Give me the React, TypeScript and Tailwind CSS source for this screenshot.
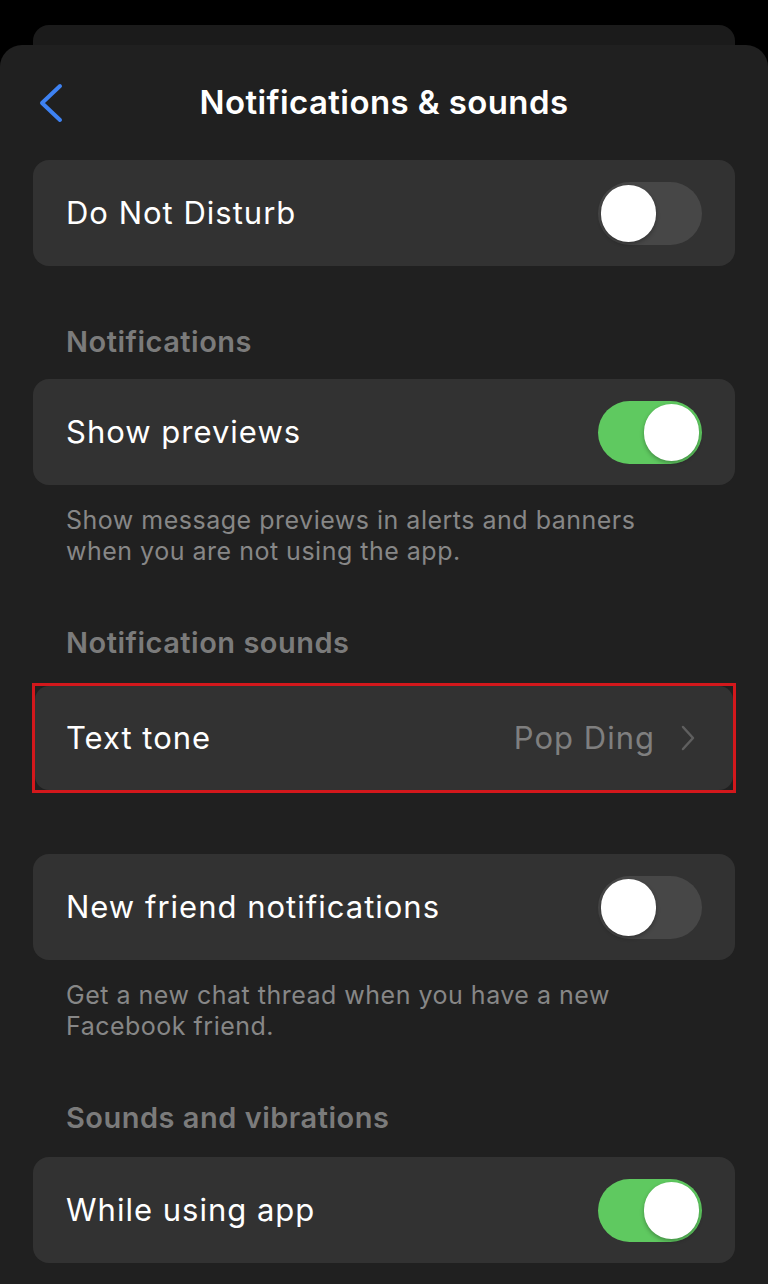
import type { ReactNode } from "react"

const font = { fontFamily: "Inter, 'Noto Sans', sans-serif" }

function Toggle({ on }: { on: boolean }) {
  return (
    <div
      className={`w-[104px] h-[63px] rounded-full flex items-center px-[3px] shrink-0 ${
        on ? "bg-[#5fc960] justify-end" : "bg-[#474747] justify-start"
      }`}
    >
      <div className="w-[55px] h-[57px] rounded-full bg-white shadow-[0_2px_4px_rgba(0,0,0,0.3)]" />
    </div>
  )
}

function Label({ children }: { children: ReactNode }) {
  return <span className="text-[31px] tracking-[1px] text-white">{children}</span>
}

function Card({ children }: { children: ReactNode }) {
  return (
    <div className="mx-[33px] h-[106px] rounded-[16px] bg-[#323232] flex items-center justify-between px-[33px]">
      {children}
    </div>
  )
}

function SectionLabel({ children, bottom = "pb-[19px]" }: { children: ReactNode; bottom?: string }) {
  return (
    <div
      className={`px-[66px] pt-[58px] ${bottom} text-[29px] leading-[36px] tracking-[0.5px] font-semibold text-[#7b7b7b]`}
    >
      {children}
    </div>
  )
}

function Footnote({ children }: { children: ReactNode }) {
  return (
    <div className="px-[66px] pt-[20px] text-[25px] leading-[31px] tracking-[0.5px] text-[#878787]">
      {children}
    </div>
  )
}

export default function App() {
  return (
    <div className="min-h-screen bg-black pt-[25px] overflow-hidden" style={font}>
      {/* stacked sheet peeking out behind */}
      <div className="mx-[33px] h-[20px] rounded-t-[16px] bg-[#1b1b1b]" />

      <div className="bg-[#202020] rounded-t-[22px] min-h-[1240px] pb-10">
        {/* Header */}
        <div className="relative h-[115px] flex items-center justify-center">
          <button className="absolute left-[37px] top-[38px]">
            <svg width="26" height="40" viewBox="0 0 26 40" fill="none">
              <path
                d="M23 3 L5 20 L23 37"
                stroke="#3e82f2"
                strokeWidth="4"
                strokeLinecap="round"
                strokeLinejoin="round"
              />
            </svg>
          </button>
          <h1 className="text-[33px] font-semibold text-white tracking-[0.4px]">Notifications &amp; sounds</h1>
        </div>

        <Card>
          <Label>Do Not Disturb</Label>
          <Toggle on={false} />
        </Card>

        <SectionLabel>Notifications</SectionLabel>
        <Card>
          <Label>Show previews</Label>
          <Toggle on />
        </Card>
        <Footnote>
          Show message previews in alerts and banners
          <br />
          when you are not using the app.
        </Footnote>

        <SectionLabel bottom="pb-[22px]">Notification sounds</SectionLabel>
        <div className="mx-[32px] border-[3px] border-[#d3181c]">
          <div className="h-[104px] rounded-[14px] bg-[#323232] flex items-center justify-between pl-[31px] pr-[38px]">
            <Label>Text tone</Label>
            <div className="flex items-center gap-[26px]">
              <span className="text-[31px] tracking-[1px] text-[#7f7f7f]">Pop Ding</span>
              <svg width="14" height="26" viewBox="0 0 14 26" fill="none">
                <path
                  d="M2 2 L12 13 L2 24"
                  stroke="#5f5f5f"
                  strokeWidth="2.5"
                  strokeLinecap="round"
                  strokeLinejoin="round"
                />
              </svg>
            </div>
          </div>
        </div>

        <div className="pt-[61px]">
          <Card>
            <Label>New friend notifications</Label>
            <Toggle on={false} />
          </Card>
        </div>
        <Footnote>
          Get a new chat thread when you have a new
          <br />
          Facebook friend.
        </Footnote>

        <SectionLabel bottom="pb-[21px]">Sounds and vibrations</SectionLabel>
        <Card>
          <Label>While using app</Label>
          <Toggle on />
        </Card>
      </div>
    </div>
  )
}
